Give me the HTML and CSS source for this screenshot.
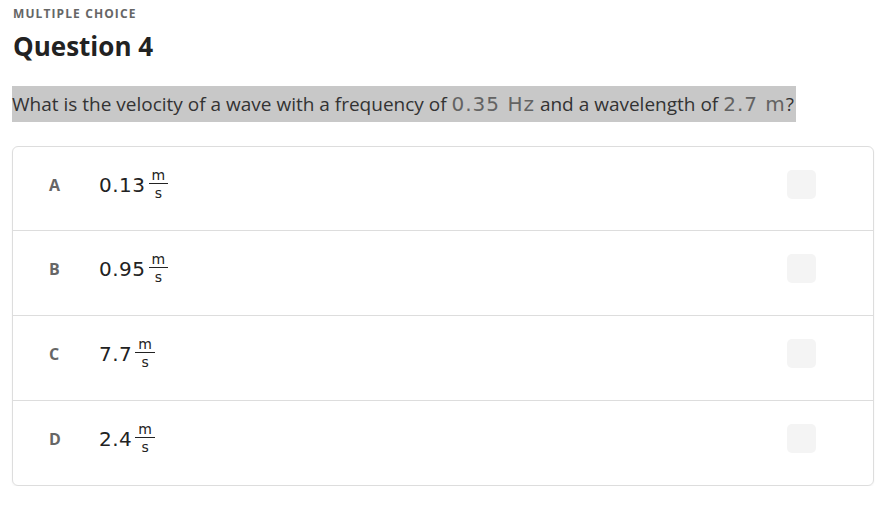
FILE: index.html
```html
<!DOCTYPE html>
<html>
<head>
<meta charset="utf-8">
<link rel="stylesheet" href="styles.css">
</head>
<body>
<div class="page">
  <div class="kicker">MULTIPLE CHOICE</div>
  <h1 class="title">Question 4</h1>
  <div class="prompt-wrap"><span class="prompt">What is the velocity of a wave with a frequency of <span class="math">0.35 Hz</span> and a wavelength of <span class="math">2.7 m</span>?</span></div>
  <div class="card">
    <div class="row">
      <span class="letter">A</span>
      <span class="answer"><span class="num">0.13</span><span class="frac"><span class="fn">m</span><span class="fd">s</span></span></span>
      <span class="box"></span>
    </div>
    <div class="row">
      <span class="letter">B</span>
      <span class="answer"><span class="num">0.95</span><span class="frac"><span class="fn">m</span><span class="fd">s</span></span></span>
      <span class="box"></span>
    </div>
    <div class="row">
      <span class="letter">C</span>
      <span class="answer"><span class="num">7.7</span><span class="frac"><span class="fn">m</span><span class="fd">s</span></span></span>
      <span class="box"></span>
    </div>
    <div class="row">
      <span class="letter">D</span>
      <span class="answer"><span class="num">2.4</span><span class="frac"><span class="fn">m</span><span class="fd">s</span></span></span>
      <span class="box"></span>
    </div>
  </div>
</div>
</body>
</html>
```
FILE: styles.css
```css
html, body {
  margin: 0;
  padding: 0;
  background: #ffffff;
}
.page {
  padding: 6px 3px 0 12px;
  font-family: "Open Sans", "DejaVu Sans", sans-serif;
}
.kicker {
  font-size: 12px;
  font-weight: 700;
  letter-spacing: 1.1px;
  color: #666666;
  margin-left: 1px;
  line-height: 16px;
}
.title {
  margin: 7px 0 0 1px;
  font-size: 26px;
  font-weight: 700;
  color: #222222;
  line-height: 34px;
}
.prompt-wrap {
  display: flex;
  margin-top: 23px;
}
.prompt {
  display: block;
  background: #c8c8c8;
  color: #333333;
  font-size: 19px;
  line-height: 36px;
  padding-right: 2px;
}
.math {
  font-family: "DejaVu Sans", sans-serif;
  color: #636363;
  font-size: 20px;
  letter-spacing: 1px;
}
.card {
  margin-top: 24px;
  border: 1px solid #dddddd;
  border-radius: 6px;
  box-shadow: 0 1px 2px rgba(0,0,0,0.05);
}
.row {
  display: flex;
  align-items: center;
  box-sizing: border-box;
  height: 85px;
  border-top: 1px solid #dddddd;
  padding: 0 57px 9px 36px;
}
.row:first-child {
  border-top: none;
  height: 83px;
  padding-bottom: 8px;
}
.letter {
  width: 50px;
  font-size: 16px;
  font-weight: 700;
  color: #666666;
}
.answer {
  flex: 1;
  display: flex;
  align-items: center;
  font-family: "DejaVu Sans", sans-serif;
  color: #222222;
}
.num {
  font-size: 20px;
  letter-spacing: 0.5px;
}
.frac {
  display: inline-flex;
  flex-direction: column;
  align-items: center;
  margin-left: 3px;
  font-size: 14px;
  line-height: 14px;
  margin-top: -1px;
}
.fn {
  padding: 0 3px 1px;
  border-bottom: 1px solid #222222;
}
.fd {
  padding-top: 2px;
}
.box {
  width: 29px;
  height: 29px;
  border-radius: 5px;
  background: #f4f4f4;
}
```
